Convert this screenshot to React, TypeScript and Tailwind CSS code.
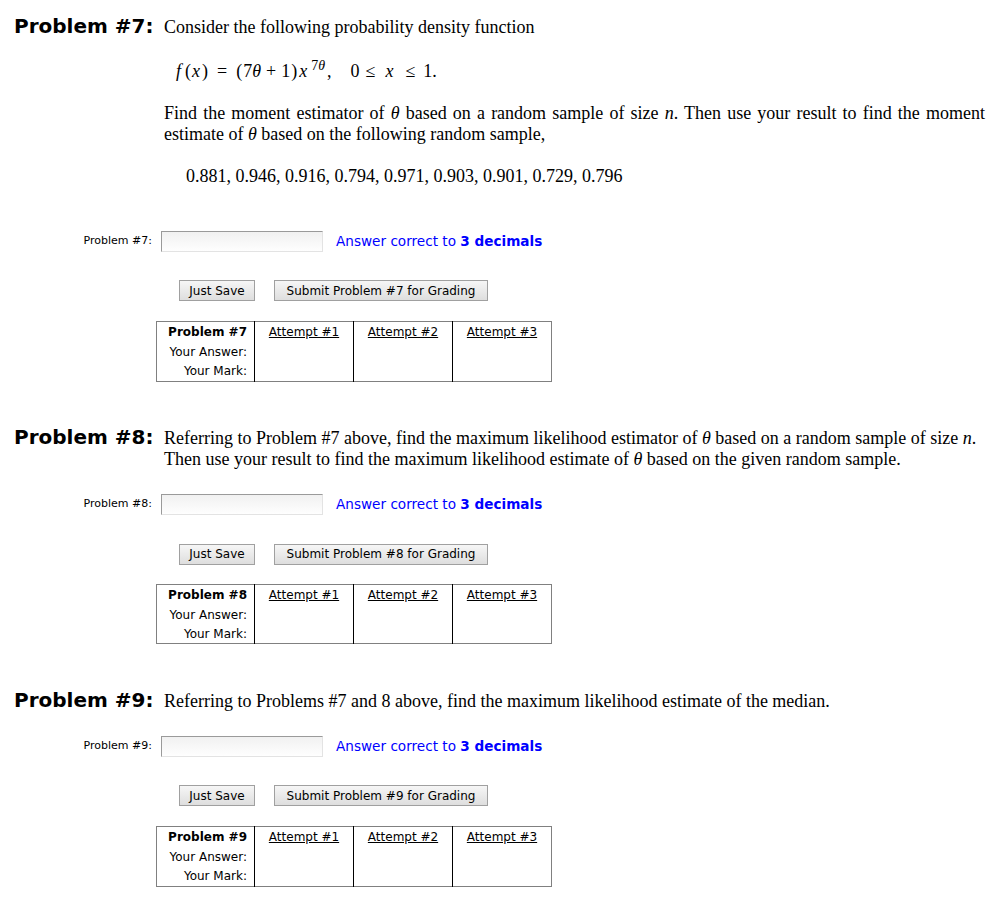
import React from "react";

const sans = "font-['DejaVu_Sans',Verdana,sans-serif]";
const serif = "font-['Liberation_Serif','Times_New_Roman',serif]";

function Theta() {
  return <i>θ</i>;
}

function AnswerRow({ n }: { n: number }) {
  return (
    <div className={`flex items-center ${sans}`}>
      <div className="w-[152px] text-right text-[11px] text-black">Problem #{n}:</div>
      <input
        type="text"
        className="ml-[9px] h-[21px] w-[162px] border border-t-[#9a9a9a] border-l-[#9a9a9a] border-r-[#e3e3e3] border-b-[#e3e3e3] bg-gradient-to-b from-[#f1f1f1] to-[#fefefe] outline-none"
      />
      <div className="ml-[13px] text-[13.6px] text-[#0000ff]">
        Answer correct to <b>3 decimals</b>
      </div>
    </div>
  );
}

function Buttons({ n }: { n: number }) {
  const btn =
    "h-[21px] border border-[#a0a0a0] bg-gradient-to-b from-[#f6f6f6] to-[#dedede] text-[12px] leading-none text-black";
  return (
    <div className={`flex pl-[179px] gap-[19px] ${sans}`}>
      <button className={`${btn} w-[76px]`}>Just Save</button>
      <button className={`${btn} w-[214px]`}>Submit Problem #{n} for Grading</button>
    </div>
  );
}

function Attempts({ n }: { n: number }) {
  const cell = "h-[20px] leading-[20px] px-[7px]";
  const last = "h-[19px] leading-[18px] px-[7px]";
  return (
    <div className={`ml-[156px] ${sans} text-[12px] text-black`}>
      <table className="border-collapse border border-[#808080]">
        <tbody>
          <tr>
            <td className={`${cell} w-[98px] text-right font-bold border-r border-black`}>Problem #{n}</td>
            <td className={`${cell} w-[99px] text-center border-r border-black`}>
              <span className="underline">Attempt #1</span>
            </td>
            <td className={`${cell} w-[99px] text-center border-r border-black`}>
              <span className="underline">Attempt #2</span>
            </td>
            <td className={`${cell} w-[99px] text-center`}>
              <span className="underline">Attempt #3</span>
            </td>
          </tr>
          <tr>
            <td className={`${cell} text-right border-r border-black`}>Your Answer:</td>
            <td className={`${cell} border-r border-black`}></td>
            <td className={`${cell} border-r border-black`}></td>
            <td className={cell}></td>
          </tr>
          <tr>
            <td className={`${last} text-right border-r border-black align-top`}>Your Mark:</td>
            <td className={`${last} border-r border-black`}></td>
            <td className={`${last} border-r border-black`}></td>
            <td className={last}></td>
          </tr>
        </tbody>
      </table>
    </div>
  );
}

function Heading({ n }: { n: number }) {
  return (
    <div className={`w-[150px] shrink-0 ${sans} text-[20px] font-bold leading-[24px] text-black`}>
      Problem #{n}:
    </div>
  );
}

function Formula() {
  return (
    <div className="mt-[23px] flex items-baseline whitespace-pre">
      <i className="ml-[12px]">f</i>
      <span className="ml-[4px]">(</span>
      <i className="ml-[1px]">x</i>
      <span className="ml-[2px]">)</span>
      <span className="ml-[9px]">=</span>
      <span className="ml-[9px]">(</span>
      <span className="ml-[1px]">7</span>
      <i>θ</i>
      <span className="ml-[5px]">+</span>
      <span className="ml-[5px]">1</span>
      <span className="ml-[1px]">)</span>
      <i className="ml-[2px]">x</i>
      <span className="relative -top-[7px] ml-[4px] text-[14px]">
        7<i>θ</i>
      </span>
      <span className="ml-[2px]">,</span>
      <span className="ml-[19px]">0</span>
      <span className="ml-[6px]">≤</span>
      <i className="ml-[10px]">x</i>
      <span className="ml-[12px]">≤</span>
      <span className="ml-[8px]">1.</span>
    </div>
  );
}

export default function App() {
  return (
    <div className="w-[992px] bg-white pb-[18px] text-black">
      {/* Problem 7 */}
      <div className="flex items-baseline pl-[14px] pr-[7px] pt-[14px]">
        <Heading n={7} />
        <div className={`${serif} flex-1 text-[18px] leading-[21px]`}>
          <p>Consider the following probability density function</p>
          <Formula />
          <p className="mt-[20px] text-justify">
            Find the moment estimator of <Theta /> based on a random sample of size <i>n</i>. Then use your result to
            find the moment estimate of <Theta /> based on the following random sample,
          </p>
          <p className="mt-[21px] pl-[22px]">0.881, 0.946, 0.916, 0.794, 0.971, 0.903, 0.901, 0.729, 0.796</p>
        </div>
      </div>
      <div className="mt-[44px]">
        <AnswerRow n={7} />
      </div>
      <div className="mt-[28px]">
        <Buttons n={7} />
      </div>
      <div className="mt-[20px]">
        <Attempts n={7} />
      </div>

      {/* Problem 8 */}
      <div className="mt-[43px] flex items-baseline pl-[14px] pr-[7px]">
        <Heading n={8} />
        <div className={`${serif} flex-1 text-[18px] leading-[21px]`}>
          <p>
            Referring to Problem #7 above, find the maximum likelihood estimator of <Theta /> based on a random sample
            of size <i>n</i>. Then use your result to find the maximum likelihood estimate of <Theta /> based on the
            given random sample.
          </p>
        </div>
      </div>
      <div className="mt-[24px]">
        <AnswerRow n={8} />
      </div>
      <div className="mt-[29px]">
        <Buttons n={8} />
      </div>
      <div className="mt-[19px]">
        <Attempts n={8} />
      </div>

      {/* Problem 9 */}
      <div className="mt-[44px] flex items-baseline pl-[14px] pr-[7px]">
        <Heading n={9} />
        <div className={`${serif} flex-1 text-[18px] leading-[21px]`}>
          <p>Referring to Problems #7 and 8 above, find the maximum likelihood estimate of the median.</p>
        </div>
      </div>
      <div className="mt-[24px]">
        <AnswerRow n={9} />
      </div>
      <div className="mt-[28px]">
        <Buttons n={9} />
      </div>
      <div className="mt-[20px]">
        <Attempts n={9} />
      </div>
    </div>
  );
}
